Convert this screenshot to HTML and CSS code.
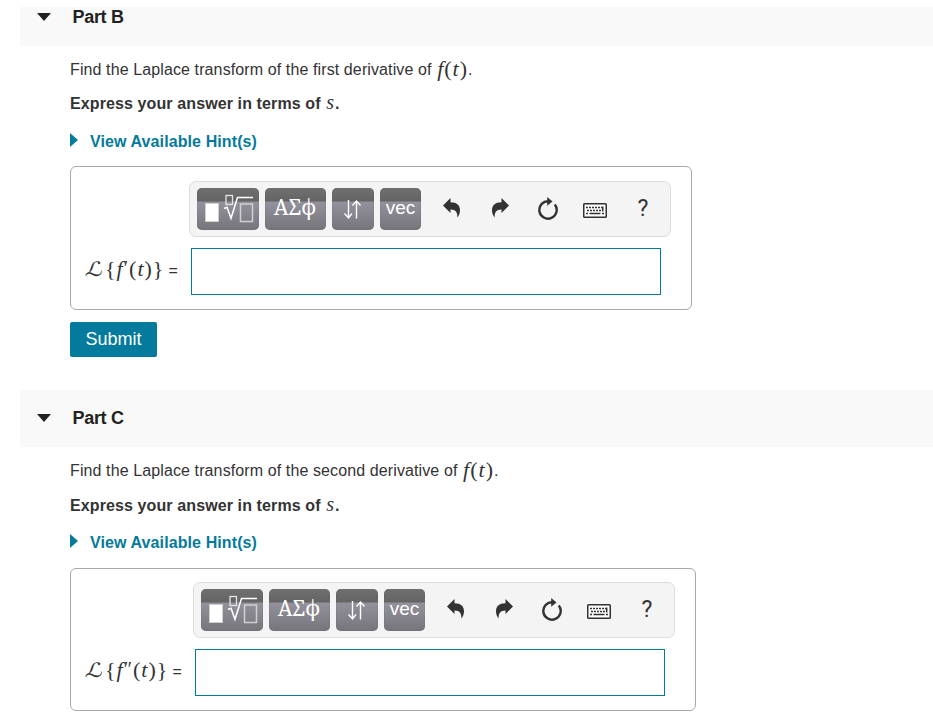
FILE: index.html
```html
<!DOCTYPE html>
<html lang="en">
<head>
    <meta charset="UTF-8">
    <meta name="viewport" content="width=device-width, initial-scale=1.0">
    <title>Laplace Transforms</title>
    <link rel="stylesheet" href="styles.css">
</head>
<body>

    <!-- Shared icons -->
    <svg class="sprite" width="0" height="0">
        <symbol id="icon-templates" viewBox="0 0 62 42">
            <rect x="8.500" y="15.500" width="13" height="18" fill="#fff" stroke="#d0d0d0"/>
            <rect x="29" y="7.500" width="6.500" height="9" fill="none" stroke="#e4e4e4" stroke-width="1.300"/>
            <path d="M27 20.500l3-1.200 4 11 6.500-20.800H56" fill="none" stroke="#fff" stroke-width="1.500"/>
            <rect x="43.500" y="16" width="12" height="17.500" fill="none" stroke="#d0d0d0" stroke-width="1.500"/>
        </symbol>
        <symbol id="icon-arrows" viewBox="0 0 42 42">
            <path d="M16.500 12v18M12.500 25.500l4 4.500 3.500-4.500M24.500 30.500V13M20.500 17.500l4-4.500 4 4.500" fill="none" stroke="#fff" stroke-width="1.400"/>
        </symbol>
        <symbol id="icon-undo" viewBox="0 0 18 20">
            <path d="M0 7.500L7.500 0v4.200C14 4.200 17 7.500 17 12c0 3-1 5.500-2.700 7.500C14.700 15 13 11.500 7.500 11.500V15z" fill="#333"/>
        </symbol>
        <symbol id="icon-reset" viewBox="0 0 20 23">
            <path d="M11 4.300A8.700 8.700 0 1 0 16.800 7.500" fill="none" stroke="#333" stroke-width="2.400"/>
            <path d="M9.200 0l5.300 4.400-5.300 4.400z" fill="#333"/>
        </symbol>
        <symbol id="icon-keyboard" viewBox="0 0 24 15">
            <rect x=".75" y=".75" width="22.500" height="13.500" rx=".8" fill="#fff" stroke="#333" stroke-width="1.500"/>
            <path d="M3 4.500h16M4 7.500h15" stroke="#333" stroke-width="1.700" stroke-dasharray="2 1"/>
            <path d="M3 10.500h2M6.500 10.500h11M19 10.500h2M19.700 3.500v5" stroke="#333" stroke-width="1.500"/>
        </symbol>
    </svg>

    <section class="part part-b">
        <header class="part-header">
            <span class="caret-down"></span>
            <h2>Part B</h2>
        </header>
        <div class="part-body">
            <p class="question">Find the Laplace transform of the first derivative of <span class="math"><i>f</i>(<i>t</i>)</span>.</p>
            <p class="instruction">Express your answer in terms of <span class="math"><i>s</i></span>.</p>
            <a class="hints"><span class="caret-right"></span>View Available Hint(s)</a>
            <div class="answer-box">
                <div class="label"><span class="script">ℒ</span><span class="math">{<i>f</i><sup>′</sup>(<i>t</i>)}</span><span class="equals">=</span></div>
                <div class="editor">
                    <div class="toolbar">
                        <button class="tool tool-templates"><svg width="62" height="42"><use href="#icon-templates"/></svg></button>
                        <button class="tool tool-greek">ΑΣϕ</button>
                        <button class="tool tool-arrows"><svg width="42" height="42"><use href="#icon-arrows"/></svg></button>
                        <button class="tool tool-vec">vec</button>
                        <span class="icon"><svg width="18" height="20"><use href="#icon-undo"/></svg></span>
                        <span class="icon redo"><svg width="18" height="20"><use href="#icon-undo"/></svg></span>
                        <span class="icon reset"><svg width="20" height="23"><use href="#icon-reset"/></svg></span>
                        <span class="icon keyboard"><svg width="24" height="15"><use href="#icon-keyboard"/></svg></span>
                        <span class="icon help">?</span>
                    </div>
                    <input class="answer" type="text">
                </div>
            </div>
            <button class="submit">Submit</button>
        </div>
    </section>

    <section class="part part-c">
        <header class="part-header">
            <span class="caret-down"></span>
            <h2>Part C</h2>
        </header>
        <div class="part-body">
            <p class="question">Find the Laplace transform of the second derivative of <span class="math"><i>f</i>(<i>t</i>)</span>.</p>
            <p class="instruction">Express your answer in terms of <span class="math"><i>s</i></span>.</p>
            <a class="hints"><span class="caret-right"></span>View Available Hint(s)</a>
            <div class="answer-box">
                <div class="label"><span class="script">ℒ</span><span class="math">{<i>f</i><sup>″</sup>(<i>t</i>)}</span><span class="equals">=</span></div>
                <div class="editor">
                    <div class="toolbar">
                        <button class="tool tool-templates"><svg width="62" height="42"><use href="#icon-templates"/></svg></button>
                        <button class="tool tool-greek">ΑΣϕ</button>
                        <button class="tool tool-arrows"><svg width="42" height="42"><use href="#icon-arrows"/></svg></button>
                        <button class="tool tool-vec">vec</button>
                        <span class="icon"><svg width="18" height="20"><use href="#icon-undo"/></svg></span>
                        <span class="icon redo"><svg width="18" height="20"><use href="#icon-undo"/></svg></span>
                        <span class="icon reset"><svg width="20" height="23"><use href="#icon-reset"/></svg></span>
                        <span class="icon keyboard"><svg width="24" height="15"><use href="#icon-keyboard"/></svg></span>
                        <span class="icon help">?</span>
                    </div>
                    <input class="answer" type="text">
                </div>
            </div>
        </div>
    </section>

</body>
</html>
```
FILE: styles.css
```css
* {
    margin: 0;
    padding: 0;
    box-sizing: border-box;
}

body {
    font-family: "Liberation Sans", Arial, sans-serif;
    font-size: 16px;
    color: #333;
    background-color: #fff;
    padding: 7px 0 0 20px;
    overflow: hidden;
}

.sprite {
    display: block;
}

/* Part header */
.part-header {
    display: flex;
    align-items: center;
    gap: 22px;
    height: 57px;
    padding: 0 0 2px 16.5px;
    background-color: #f9f9f9;
}

.part-b .part-header {
    height: 39px;
    padding-bottom: 20px;
}

.part-header h2 {
    font-size: 18px;
    line-height: 20px;
    letter-spacing: -0.3px;
    color: #222;
}

.caret-down {
    border: 7px solid transparent;
    border-top: 8px solid #222;
    border-bottom: 0;
}

.part-body {
    padding-left: 50px;
}

/* Question text */
.question,
.instruction {
    height: 24px;
    line-height: 24px;
    letter-spacing: 0.11px;
    white-space: nowrap;
}

.question {
    margin-top: 12px;
}

.instruction {
    margin-top: 10px;
    font-weight: bold;
}

.part-c .instruction {
    margin-top: 11px;
}

.math {
    font-family: "Liberation Serif", "Times New Roman", serif;
    font-size: 22px;
    font-weight: normal;
    line-height: 1;
    letter-spacing: 1px;
}

.math sup {
    font-size: 20px;
    line-height: 0;
    letter-spacing: 0;
    vertical-align: 1px;
    margin-right: 1px;
}

.question .math {
    margin-left: 1px;
    vertical-align: -1px;
    line-height: 0;
}

.instruction .math {
    margin-left: 1px;
    font-size: 20px;
}

.hints {
    display: flex;
    align-items: center;
    gap: 12px;
    height: 24px;
    margin-top: 14px;
    font-weight: bold;
    letter-spacing: 0.1px;
    color: #047a9c;
}

.part-c .hints {
    margin-top: 13px;
}

.caret-right {
    margin-bottom: 5px;
    border: 7px solid transparent;
    border-left: 8px solid #047a9c;
    border-right: 0;
}

/* Answer box */
.answer-box {
    display: flex;
    width: 622px;
    height: 144px;
    margin-top: 12px;
    padding: 14px 0 0 14px;
    border: 1px solid #a6a8ab;
    border-radius: 6px;
}

.part-c .answer-box {
    width: 626px;
    height: 143px;
    padding-top: 13px;
    margin-top: 13px;
}

.label {
    display: flex;
    align-items: baseline;
    width: 104px;
    padding-top: 77px;
    line-height: 24px;
    white-space: nowrap;
}

.part-c .label {
    width: 108px;
}

.label .script {
    width: 20px;
    font-family: "DejaVu Serif", "DejaVu Sans", serif;
    font-size: 20px;
    line-height: 1;
    transform: skewX(-14deg) scaleX(1.2);
    transform-origin: 0 75%;
}

.equals {
    margin-left: 4px;
}

.toolbar {
    display: flex;
    gap: 6px;
    width: 482px;
    height: 56px;
    padding: 6px 0 0 7px;
    background-color: #f4f4f4;
    border: 1px solid #ddd;
    border-radius: 7px;
}

.tool {
    width: 62px;
    height: 42px;
    border: 0;
    border-radius: 5px;
    background: linear-gradient(#707070, #646464 13px, #93919b 14px, #76757b);
    box-shadow: inset 0 0 1px #555;
    color: #fff;
    line-height: 1;
}

.tool svg {
    display: block;
}

.tool-greek {
    width: 61px;
    padding: 0 1px 3px 0;
    font-family: "Noto Serif", "DejaVu Serif", "Liberation Serif", serif;
    font-size: 21px;
}

.tool-arrows {
    width: 42px;
}

.tool-vec {
    width: 41px;
    padding-bottom: 4px;
    font-family: "Liberation Sans", Arial, sans-serif;
    font-size: 19px;
}

.icon {
    display: flex;
    align-items: center;
    justify-content: center;
    width: 42px;
    height: 40px;
}

.tool-vec + .icon {
    margin-left: 4px;
}

.redo svg {
    transform: scaleX(-1);
}

.keyboard {
    padding: 5px 2px 0 0;
}

.help {
    padding-right: 2px;
    font-family: Roboto, sans-serif;
    font-size: 23px;
}

.answer {
    display: block;
    width: 470px;
    height: 47px;
    margin: 11px 0 0 2px;
    border: 1px solid #047a9c;
    background-color: #fff;
}

/* Submit */
.submit {
    display: block;
    width: 87px;
    height: 35px;
    margin-top: 12px;
    border: 0;
    border-radius: 2px;
    background-color: #047a9c;
    color: #fff;
    font-family: "Liberation Sans", Arial, sans-serif;
    font-size: 18px;
}

.part-c {
    margin-top: 33px;
}
```
